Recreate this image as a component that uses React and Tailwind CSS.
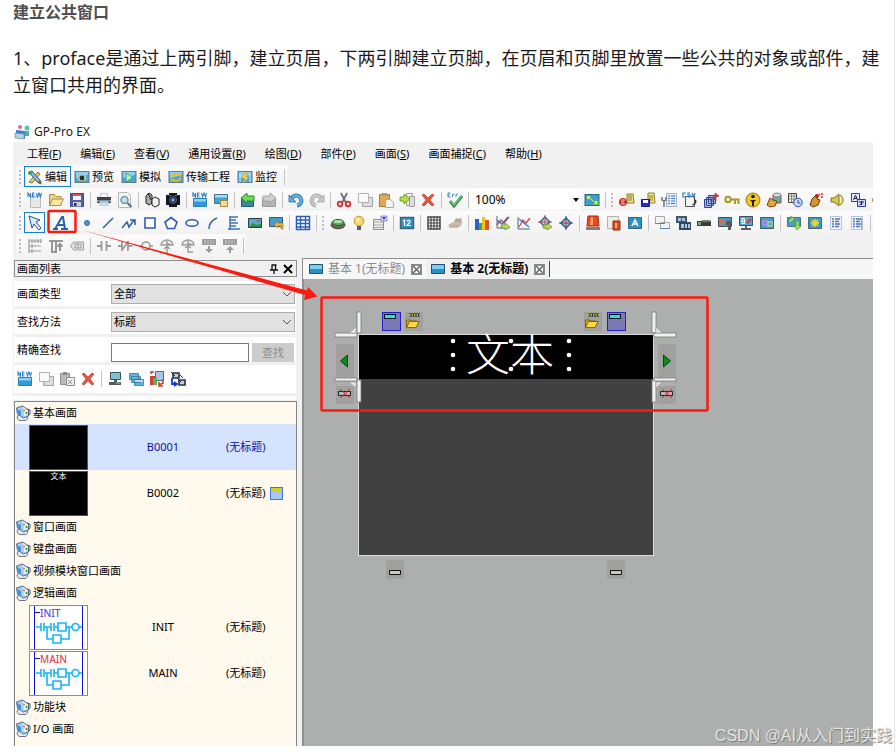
import { useState } from 'react';

const screenGlyph = (
  <>
    <rect x="1" y="2.5" width="14" height="11" fill="#4aa6dc" stroke="#5f7d8c" />
    <path d="M2 3h12v3L2 9z" fill="#8fd0f2" />
  </>
);

const newGlyph = (
  <path d="M1 5V1l2.500 4V1M7.500 1h-2v4h2M5.500 3h2M9.500 1l1 4 1.500-4 1.500 4 1-4" fill="none" stroke="#2f7fc4" strokeWidth="1.100" />
);

const pageLines = (
  <>
    <rect x="2.5" y="1.5" width="11" height="13" fill="#f1f5fb" stroke="#b9c4d6" />
    <path d="M4 4h2M7 4h5M4 6.500h2M7 6.500h4M4 9h2M7 9h5M4 11.500h2M7 11.500h4" stroke="#4d74b8" strokeWidth="1.300" />
  </>
);

const ICONS = {
  edit: (
    <>
      <path d="M2 13 11 3l2 2L5 14z" fill="#f0d34c" stroke="#6b7b4a" />
      <path d="m2 3 3-1 8 9 1 4-4-2z" fill="#8fb4d6" stroke="#4c5b6e" />
      <circle cx="3" cy="4" r="2" fill="#3fa24b" />
      <circle cx="13" cy="13" r="1.500" fill="#7a6020" />
    </>
  ),
  preview: (
    <>
      {screenGlyph}
      <ellipse cx="8" cy="9" rx="4.500" ry="3" fill="#c9c58a" />
      <circle cx="8" cy="9" r="2.400" fill="#1c3440" />
    </>
  ),
  simulate: (
    <>
      {screenGlyph}
      <path d="m5 4 7 4.500L5 13z" fill="#b7eec0" stroke="#4aa36a" />
    </>
  ),
  transfer: (
    <>
      {screenGlyph}
      <path d="M3.500 8a4.500 3.500 0 0 1 8-1.500M12.500 9a4.500 3.500 0 0 1-8 1.500" fill="none" stroke="#e5bd2e" strokeWidth="2" />
      <path d="m13.500 4-1 4-3.500-2zM2.500 13l1-4L7 11z" fill="#e5bd2e" />
    </>
  ),
  monitor: (
    <>
      {screenGlyph}
      <path d="M10 3 4 9h4l-2 5 6-6H9z" fill="#ffe04a" stroke="#c59b15" strokeWidth=".7" />
      <path d="M3 5v8M13 5v8" stroke="#dff3fb" />
    </>
  ),
  newFile: (
    <>
      <path d="M3.500 4.500h10v11h-10z" fill="#e6e8ea" stroke="#b8bcc0" />
      {newGlyph}
    </>
  ),
  open: (
    <>
      <path d="M1.500 13.500v-11h5l1.500 2h5v9z" fill="#ead489" stroke="#b0904a" />
      <path d="m1.500 13.500 3-6.500h11l-3 6.500z" fill="#f9e7a3" stroke="#b0904a" />
    </>
  ),
  save: (
    <>
      <path d="M1.500 1.500h13v13h-13z" fill="#5160a8" stroke="#3e4a86" />
      <path d="M4 2h8v6H4z" fill="#f7f7fb" />
      <path d="M4 2h8v2H4z" fill="#e0555a" />
      <path d="M4 10h8v4.500H4z" fill="#c5cde2" />
      <path d="M5 11h2.500v3H5z" fill="#2c3565" />
    </>
  ),
  print: (
    <>
      <path d="M4.500 1.500h7V6h-7z" fill="#f5f5f5" stroke="#c4c4c4" />
      <path d="M1 5h14v6H1z" fill="#3d4247" />
      <path d="M1 8h14v2H1z" fill="#8b9298" />
      <path d="M4 9.500h8l1 4.500H3z" fill="#b9daf0" />
    </>
  ),
  printPreview: (
    <>
      <path d="M1.500.5h9l3 3v12h-12z" fill="#f6f6f6" stroke="#b7b7b7" />
      <circle cx="7.500" cy="8" r="3.500" fill="#bfe3f2" stroke="#7b98a8" strokeWidth="1.500" />
      <path d="m10.500 11 4 4" stroke="#5a6f7c" strokeWidth="2" />
    </>
  ),
  copyBlocks: (
    <>
      <path d="m2 4 3-3 3 2v8l-3 2-3-2z" fill="#a9a9a9" stroke="#222" />
      <path d="m8 7 3-2 4 2v6l-4 2-3-2z" fill="#f2f2f2" stroke="#222" />
      <path d="m4 1 3 7" stroke="#222" />
    </>
  ),
  camera: (
    <>
      <path d="M4 1h8v2h3v10h-3v2H4v-2H1V3h3z" fill="#15181c" />
      <path d="M4 3h2v1H4zM10 3h2v1h-2z" fill="#6c7682" />
      <circle cx="8" cy="8" r="3.500" fill="#24354c" stroke="#4d5865" />
      <circle cx="8" cy="8" r="1.800" fill="#6c9ae0" />
    </>
  ),
  newScreen: (
    <>
      <path d="M1.500 6.500h13v8h-13z" fill="#2f9bdc" stroke="#2a7fb4" />
      <path d="M2 7h12v2.500H2z" fill="#8fd2f4" />
      {newGlyph}
    </>
  ),
  openScreen: (
    <>
      <path d="M1.500 2.500h13v9h-13z" fill="#3fa4dc" stroke="#44738c" />
      <path d="M2 3h12v2.500H2z" fill="#a6daf5" />
      <path d="M7.500 8.500h7v6h-7z" fill="#f5df8e" stroke="#a48b42" />
    </>
  ),
  importGreen: (
    <>
      <path d="M1.500 6.500h12v8h-12z" fill="#3a86a8" stroke="#245a70" />
      <path d="m1 6 6-5v3h7v5H7v2z" fill="#6edc52" stroke="#2d8a2a" />
    </>
  ),
  exportGray: (
    <>
      <path d="M1.500 6.500h13v8h-13z" fill="#b4b4b4" stroke="#9a9a9a" />
      <path d="m15 6-6-5v3H2v5h7v2z" fill="#cfcfcf" stroke="#a4a4a4" />
    </>
  ),
  undo: (
    <>
      <path d="M4 6a5 5 0 1 1 5 7.500" fill="none" stroke="#2f6f9f" strokeWidth="4" />
      <path d="M4 6a5 5 0 1 1 5 7.500" fill="none" stroke="#5cb2e4" strokeWidth="2.400" />
      <path d="M1 3v7h7z" fill="#5cb2e4" stroke="#2f6f9f" strokeWidth=".8" />
    </>
  ),
  redo: (
    <>
      <path d="M12 6a5 5 0 1 0-5 7.500" fill="none" stroke="#a2a2a2" strokeWidth="4" />
      <path d="M12 6a5 5 0 1 0-5 7.500" fill="none" stroke="#c9c9c9" strokeWidth="2.400" />
      <path d="M15 3v7H8z" fill="#c9c9c9" stroke="#a2a2a2" strokeWidth=".8" />
    </>
  ),
  cut: (
    <>
      <path d="m5 1 5 10M11 1 6 11" stroke="#6c7078" strokeWidth="1.800" />
      <circle cx="4" cy="12" r="2.300" fill="none" stroke="#d42a2a" strokeWidth="1.800" />
      <circle cx="12" cy="12" r="2.300" fill="none" stroke="#d42a2a" strokeWidth="1.800" />
    </>
  ),
  copy: (
    <>
      <path d="M5.500 5.500h10v9h-10z" fill="#dedede" stroke="#a3a3a3" />
      <path d="M1.500 1.500h10v9h-10z" fill="#fafafa" stroke="#b3b3b3" />
    </>
  ),
  paste: (
    <>
      <path d="M1.500 2.500h10v12h-10z" fill="#e0aa52" stroke="#a97b31" />
      <path d="M4 1h5v3H4z" fill="#9c9c9c" />
      <path d="M7.500 7.500h5l3 3v5h-8z" fill="#f4f4f4" stroke="#a9a9a9" />
    </>
  ),
  duplicate: (
    <>
      <path d="M7.500 1.500h6v12h-6z" fill="#eee" stroke="#9e9e9e" />
      <path d="M10.500 4.500h5v10h-5z" fill="#ddd" stroke="#9e9e9e" />
      <path d="M1 5h4V2l6 5-6 5V9H1z" fill="#b8e04e" stroke="#5f8b1f" strokeWidth=".8" />
    </>
  ),
  remove: <path d="m2 3 2-1 4 4 4-4 2 1-4 5 4 5-2 1-4-4-4 4-2-1 4-5z" fill="#e2563d" stroke="#a7382a" strokeWidth=".6" />,
  errorCheck: (
    <>
      <path d="M3.500 1H1v4h2.500M1 3h2M5.500 5V2.500l2-.5M9 5V2.500l2-.5" fill="none" stroke="#3c87d0" />
      <path d="m3 9 4 5 8-10" fill="none" stroke="#34954e" strokeWidth="3" />
      <path d="m3.500 9 3.500 4 7.500-9" fill="none" stroke="#8ee09c" />
    </>
  ),
  screenProp: (
    <>
      <rect x="1" y="2.500" width="14" height="11" fill="#3e9ec9" stroke="#2b6882" />
      <path d="M8 13h6.500V8z" fill="#7cc24b" />
      <path d="m4 5 8 6" stroke="#e2ec58" />
      <path d="M3 4h3v3H3zM11 9h2v3h-2z" fill="#e2ec58" />
    </>
  ),
  alarmDb: (
    <>
      <path d="M8 2h6l1 9H8z" fill="#f2e58a" stroke="#8a7d2a" />
      <path d="M9 4h4M9 6h4M9 8h4" stroke="#8a7d2a" />
      <circle cx="4" cy="10" r="4" fill="#c92d26" />
      <path d="M2 8h4M2 10h3M2 12h4" stroke="#fff" strokeWidth=".8" />
    </>
  ),
  saveDb: (
    <>
      <path d="M8 1h6l1 10H8z" fill="#f2e58a" stroke="#8a7d2a" />
      <path d="M9 4h4M9 6h4M9 8h4" stroke="#8a7d2a" />
      <path d="M1.500 7.500h8v7h-8z" fill="#2c2cc4" stroke="#1b1b7d" />
      <path d="M3 8h5v3H3z" fill="#fff" />
    </>
  ),
  toolList: (
    <>
      <path d="M5.500 1.500h10v13h-10z" fill="#e3edf8" stroke="#9fb3cc" />
      <path d="M7 4h2M10 4h4M7 6.500h2M10 6.500h4M7 9h2M10 9h4M7 11.500h2M10 11.500h4" stroke="#3f7dc0" strokeWidth="1.200" />
      <path d="M1 5v3l2 1 2-1V5M3 8v7" fill="none" stroke="#707478" strokeWidth="1.500" />
    </>
  ),
  csv: (
    <>
      <path d="M3.500 4.500h9v10h-9z" fill="#f4f4f4" stroke="#565656" />
      <path d="M4 1H1v4h3M8 1H6v2h2v2H6M10 1l1.500 4L13 1" fill="none" stroke="#2382cf" strokeWidth="1.200" />
      <path d="M12.500 8c2.500 1 1 4-2 5" fill="none" stroke="#333" strokeWidth="1.500" />
    </>
  ),
  stackRed: (
    <>
      <path d="M1.500 7.500h7v8h-7zM3.500 5.500h7v8h-7zM5.500 3.500h7v8h-7z" fill="#a9bbea" stroke="#34458f" />
      <path d="M7 7h4M7 9h4" stroke="#34458f" />
      <path d="M9 5h3V1l4 3-3 1v4z" fill="#e2403a" stroke="#8d1f1a" strokeWidth=".6" />
    </>
  ),
  key: (
    <>
      <circle cx="4" cy="7.500" r="2.700" fill="none" stroke="#a99a22" strokeWidth="2" />
      <path d="M7 7.500h8.500M11 8v4M14.500 8v4" stroke="#a99a22" strokeWidth="2" />
    </>
  ),
  info: (
    <>
      <circle cx="8" cy="8" r="7" fill="#f6c81f" stroke="#8d6f10" />
      <circle cx="8" cy="4.500" r="1.800" fill="#222" />
      <path d="M5 8h6l-2 2v4H7v-4z" fill="#222" />
    </>
  ),
  handData: (
    <>
      <path d="M7 3h8v8H7z" fill="#58b4a4" stroke="#a8464a" />
      <ellipse cx="11" cy="3" rx="4" ry="2" fill="#d6dedc" stroke="#7b8583" />
      <path d="m1 13 3-7 3 2 4 1-2 5-5 1z" fill="#e3a43e" stroke="#6f4513" />
    </>
  ),
  clockTable: (
    <>
      <path d="M1.500 1.500h8v9h-8z" fill="#f5f5d5" stroke="#444" />
      <path d="M2 4h7M2 7h7M4.500 2v8M7 2v8" stroke="#888" />
      <circle cx="11" cy="10.500" r="4.300" fill="#c8d9f5" stroke="#2d4fa6" />
      <path d="M11 8v3h2.500" fill="none" stroke="#2d4fa6" />
    </>
  ),
  handSpark: (
    <>
      <path d="m2 13 2-6 4-4 2 1-1 3 3 1-2 5-5 2z" fill="#d79333" stroke="#69380f" />
      <path d="m11 2 1 1M14 1v2M13 5h2" stroke="#e02a22" strokeWidth="1.500" />
      <circle cx="9" cy="4" r="2" fill="#b42a1c" />
    </>
  ),
  speaker: (
    <>
      <path d="M2 6h3l5-4v12l-5-4H2z" fill="#d5cb52" stroke="#77701a" />
      <path d="M11 3c4 2 4 8 0 10" fill="#efe9a6" stroke="#77701a" />
    </>
  ),
  language: (
    <>
      <path d="M1.500 1.500h8v8h-8z" fill="#e9eefc" stroke="#2a3f9e" />
      <path d="M7.500 7.500h8v7h-8z" fill="#cfd9f7" stroke="#2a3f9e" />
      <path d="M3.500 8 5.500 3l2 5M4 6.500h3M9 10h5M11.500 9v4M9.500 13l3-2" fill="none" stroke="#14205e" />
    </>
  ),
  dash: <path d="M1 8h10" stroke="#9b8a3f" strokeWidth="3" />,
  pointer: <path d="m2 1 11 4-4 2 5 6-2 2-5-6-2 4z" fill="#dcecfb" stroke="#24548f" />,
  letterA: <path d="M0 14h5M8 14h7M2 14 9 2h1l2 12M5 10h6" fill="none" stroke="#2b62a8" strokeWidth="2" />,
  dot: <circle cx="8" cy="8" r="2.500" fill="#5691d8" stroke="#2c66ad" />,
  line: <path d="M3 13 13 3" stroke="#3265ad" strokeWidth="1.600" />,
  polyline: <path d="m1 13 5-6 2 5 5-7M9 5h5v5" fill="none" stroke="#3265ad" strokeWidth="1.600" />,
  rect: <path d="M3 3h10v10H3z" fill="#fff" stroke="#2c5dad" strokeWidth="1.600" />,
  polygon: <path d="m8 2.500 6 4.500-2.500 6.500h-7L2 7z" fill="#fff" stroke="#2c5dad" strokeWidth="1.600" />,
  ellipse: <ellipse cx="8" cy="8" rx="6" ry="3.300" fill="#fff" stroke="#2c5dad" strokeWidth="1.600" />,
  arc: <path d="M4 14c0-6 3-9 8-11" fill="none" stroke="#3265ad" strokeWidth="1.600" />,
  scale: <path d="M4 1v14M4 2h8M4 5h6M4 8h8M4 11h6M2 14h12" stroke="#3f74bc" strokeWidth="1.500" fill="none" />,
  image: (
    <>
      <path d="M1.500 3.500h13v9h-13z" fill="#58a7d4" stroke="#293d47" />
      <path d="m2 12 4-4 3 2 5-1v3z" fill="#3a8a3d" />
      <circle cx="11" cy="6" r="1.300" fill="#e34a3c" />
    </>
  ),
  imageCall: (
    <>
      <path d="M1.500 2.500h13v9h-13z" fill="#4a9cc8" stroke="#2f5c73" />
      <path d="m6 10 4-4v2h5v6h-2v-3h-3v2z" fill="#f0b33a" stroke="#99661a" strokeWidth=".6" />
    </>
  ),
  table: (
    <>
      <path d="M1.500 1.500h13v13h-13z" fill="#fff" stroke="#2d5eb0" strokeWidth="1.500" />
      <path d="M1 5h14M1 8.500h14M1 12h14M5.500 1v14M10.500 1v14" stroke="#2d5eb0" strokeWidth="1.300" />
    </>
  ),
  lampSwitch: (
    <>
      <ellipse cx="8" cy="10" rx="7" ry="3.800" fill="#6d6a52" stroke="#4a4838" />
      <ellipse cx="8" cy="7.500" rx="6" ry="3" fill="#59ac5e" stroke="#2d5e32" />
      <ellipse cx="8" cy="6.500" rx="4" ry="1.300" fill="#b9ecb5" />
    </>
  ),
  bulb: (
    <>
      <circle cx="8" cy="6" r="4.800" fill="#fbd968" stroke="#c8962a" />
      <circle cx="7" cy="5" r="1.800" fill="#fff5c9" />
      <path d="M6 11h4v4H6z" fill="#5d6066" />
    </>
  ),
  listDrop: (
    <>
      <path d="M1.500 4.500h10v10h-10z" fill="#eee" stroke="#8d8d8d" />
      <path d="M2 7h9M2 10h9M2 12.500h9" stroke="#a5a5a5" />
      <path d="M9 1h6v5H9z" fill="#d9d9fb" stroke="#6a6ad0" strokeWidth=".7" />
      <path d="M10 2h4l-2 3z" fill="#3a3ad0" />
    </>
  ),
  numeric: (
    <>
      <path d="M1.500 2.500h13v11h-13z" fill="#2f92c6" stroke="#4a5f6c" strokeWidth="1.500" />
      <path d="m4 6 1.500-1v6M8 6.500C8.500 4.500 11.500 5 11 7l-3 3.500h4" fill="none" stroke="#fff" strokeWidth="1.200" />
    </>
  ),
  keypad: (
    <>
      <path d="M2 2h12v12H2z" fill="#fff" stroke="#444" strokeWidth="1.500" />
      <path d="M2 5h12M2 8h12M2 11h12M5 2v12M8 2v12M11 2v12" stroke="#444" strokeWidth="1.200" />
    </>
  ),
  recipe: (
    <>
      <path d="m1 10 5-3 9 1-2 4H3z" fill="#c7bba5" />
      <path d="m7 7 2-4 2 1 3-1 1 5z" fill="#b5a88f" />
      <path d="M2 12h9" stroke="#a39987" />
    </>
  ),
  bars: (
    <>
      <path d="M1 4h4v11H1z" fill="#2b62c6" />
      <path d="M5 8h3v7H5z" fill="#35a84c" />
      <path d="M8 2h3v13H8z" fill="#f2c31d" />
      <path d="M11 5h4v10h-4z" fill="#e2502a" />
    </>
  ),
  trendGreen: (
    <>
      <path d="M2 1v12h12" fill="none" stroke="#44658f" />
      <path d="m2 10 4-5 3 3 5-6" fill="none" stroke="#d04646" strokeWidth="1.300" />
      <path d="m2 5 5 4 6-7" fill="none" stroke="#3270c0" strokeWidth="1.300" />
      <path d="M6 10h4V8l5 4-5 3v-2H6z" fill="#b4e045" stroke="#5c8a1e" strokeWidth=".7" />
    </>
  ),
  trend: (
    <>
      <path d="M2 2v12h12" fill="none" stroke="#44658f" />
      <path d="m3 12 4-7 3 3 4-5" fill="none" stroke="#d04646" strokeWidth="1.300" />
      <path d="m3 4 10 8" stroke="#3270c0" strokeWidth="1.300" />
    </>
  ),
  targetGreen: (
    <>
      <path d="m8 2 5 5-5 5-5-5z" fill="#c6d3ea" stroke="#38557f" strokeWidth="1.300" />
      <path d="M8 0v14M1 7h14" stroke="#b54a4a" />
      <path d="M6 10h4V8l5 4-5 3v-2H6z" fill="#b4e045" stroke="#5c8a1e" strokeWidth=".7" />
    </>
  ),
  target: (
    <>
      <path d="m8 3 5 5-5 5-5-5z" fill="#c6d3ea" stroke="#32598f" strokeWidth="1.500" />
      <path d="M8 1v14M1 8h14" stroke="#364c70" />
      <circle cx="8" cy="8" r="1.500" fill="#d04646" />
    </>
  ),
  alarm: (
    <>
      <path d="M3 1h10l1 10H2z" fill="#ec4a22" stroke="#9c2d12" />
      <path d="M6 2h2v8H5z" fill="#ffa05e" />
      <path d="M1 12h14v3H1z" fill="#8a7a74" />
    </>
  ),
  alarmPage: (
    <>
      <path d="M1.500 1.500h11v12h-11z" fill="#eeece9" stroke="#b6b2ad" />
      <path d="M7 6h7v9H7z" fill="#e04c22" stroke="#8e2a10" />
      <path d="M9 8h2v5H9z" fill="#ffb27a" />
    </>
  ),
  textA: (
    <>
      <path d="M1.500 2.500h13v11h-13z" fill="#2d93c4" stroke="#3d6478" />
      <path d="m5 11 3-6 3 6M6 9h4" fill="none" stroke="#fff" strokeWidth="1.500" />
    </>
  ),
  windows: (
    <>
      <path d="M1.500 1.500h9v7h-9zM6.500 7.500h9v6h-9z" fill="#f3f3f3" stroke="#a6a9ad" />
      <path d="M1 8.500h10M6 13.500h10" stroke="#5b83b5" />
    </>
  ),
  film: (
    <>
      <path d="M1 1h11v7H1z" fill="#4b5664" />
      <path d="M4 7h12v8H4z" fill="#35475c" />
      <path d="M3 3h3v3H3zM7 3h3v3H7zM6 9h3v4H6zM10 9h2v4h-2zM13 9h2v4h-2z" fill="#a9c7e2" />
    </>
  ),
  movie: (
    <>
      <path d="M1 6h14v5H1z" fill="#3b3e36" />
      <path d="M2 7h3v3H2z" fill="#8b9c7b" />
      <path d="M6 5h8v2H6z" fill="#777b70" />
    </>
  ),
  videoTools: (
    <>
      <path d="M1.500 2.500h13v9h-13z" fill="#4d97bf" stroke="#41515c" />
      <path d="m3 4 6 2v2l-6 2z" fill="#c97460" />
      <path d="M9 6h6v3l-1 1v5h-3v-5H9z" fill="#585b5e" />
    </>
  ),
  pcMonitor: (
    <>
      <path d="M1.500 1.500h13v9h-13z" fill="#4fa6d8" stroke="#42515c" />
      <path d="M4 3.500h2.500v5H4zM4 6h3" fill="none" stroke="#fff" />
      <path d="m9 8 4-4" stroke="#d03a3a" strokeWidth="2" />
      <path d="M7 11h2v2h4v2H3v-2h4z" fill="#5c6064" />
    </>
  ),
  videoWindow: (
    <>
      <path d="M1.500 2.500h13v11h-13z" fill="#4b9bd2" stroke="#3f5c70" />
      <path d="M4 6h4v4H4z" fill="none" stroke="#c58ade" strokeWidth="1.300" />
      <path d="M9 7h4v4H9z" fill="none" stroke="#9fdc8a" strokeWidth="1.300" />
    </>
  ),
  screenDown: (
    <>
      <path d="M1.500 2.500h13v9h-13z" fill="#4aa0c2" stroke="#4a7280" />
      <path d="M3 7V4h2V1l4 3-4 3M10 6h3v5h2l-4 4-3-4h2z" fill="#9ee05a" stroke="#4b8a28" strokeWidth=".6" />
    </>
  ),
  screenStar: (
    <>
      <path d="M1.500 2.500h13v11h-13z" fill="#3f9ac8" stroke="#4a6674" />
      <path d="M8 4v8M4 8h8M5 5l6 6M11 5l-6 6" stroke="#f8d52e" strokeWidth="1.500" />
    </>
  ),
  textList: pageLines,
  textList2: (
    <>
      {pageLines}
      <path d="M12 3h1v11h-1z" fill="#8ea3c4" />
    </>
  ),
  rung: <path d="M2 1v14M1 3h13M5 1v4M8 1v4M11 1v4M14 1v4M2 8h12M2 13h12M5 11v4M5 6v4" fill="none" stroke="#9d9d9d" strokeWidth="1.200" />,
  branch: <path d="M1 3h14M4 3v11h4V3M12 13V6M9.500 8.500 12 6l2.500 2.500" fill="none" stroke="#969696" strokeWidth="2" />,
  label: (
    <>
      <path d="m1.500 8 3-4h10v8h-10z" fill="#e4e4e4" stroke="#9e9e9e" />
      <path d="M6 6h6v4H6zM9 6v4" fill="none" stroke="#9e9e9e" />
    </>
  ),
  contact: <path d="M1 8h4M11 8h4M5.500 3v10M10.500 3v10" stroke="#9b9b9b" strokeWidth="1.800" />,
  contactNot: <path d="M1 8h4M11 8h4M5 3v10M11 3v10M5 12l6-8" stroke="#9b9b9b" strokeWidth="1.800" />,
  coil: <path d="M1 8h3M12 8h3M4 8a4 4 0 0 1 8 0 4 4 0 0 1-8 0" fill="none" stroke="#9b9b9b" strokeWidth="1.600" />,
  timerUp: (
    <>
      <path d="M2 7a6 5 0 0 1 12 0z" fill="#eee" stroke="#999" strokeWidth="1.300" />
      <path d="M8 3v3h3M8 15V9M5 11l3-2.500 3 2.500" fill="none" stroke="#999" strokeWidth="1.400" />
    </>
  ),
  timerDown: (
    <>
      <path d="M2 7a6 5 0 0 1 12 0z" fill="#eee" stroke="#999" strokeWidth="1.300" />
      <path d="M8 3v3h3M5 10l3-2 3 2M8 9v5h5" fill="none" stroke="#999" strokeWidth="1.400" />
    </>
  ),
  counterDown: (
    <>
      <path d="M1 1h14v6H1z" fill="#9c9c9c" />
      <path d="M3 3h10M3 5h10" stroke="#c9c9c9" strokeDasharray="2 1" />
      <path d="M7 8h2v3h3l-4 4-4-4h3z" fill="#9c9c9c" />
    </>
  ),
  counterUp: (
    <>
      <path d="M1 1h14v6H1z" fill="#9c9c9c" />
      <path d="M3 3h10M3 5h10" stroke="#c9c9c9" strokeDasharray="2 1" />
      <path d="M7 15h2v-3h3L8 8l-4 4h3z" fill="#9c9c9c" />
    </>
  ),
  pasteGray: (
    <>
      <path d="M1.500 2.500h9v11h-9z" fill="#b9b9b9" stroke="#8e8e8e" />
      <path d="M4 1h4v3H4z" fill="#8a8a8a" />
      <path d="M7.500 6.500h8v8h-8z" fill="#ededed" stroke="#8e8e8e" />
      <path d="m9 13 4-4M9 9l4 4" stroke="#9b9b9b" />
    </>
  ),
  computer: (
    <>
      <path d="M3.500 1.500h10v7h-10z" fill="#7cc3d8" stroke="#3f4f57" />
      <path d="M7 9h3v2H7zM2 11h12v3H2z" fill="#555d62" />
      <path d="M9 12h4" stroke="#7ee06a" />
    </>
  ),
  layers: (
    <>
      <path d="M1.500 2.500h9v6h-9zM3.500 5.500h9v6h-9zM6.500 8.500h9v6h-9z" fill="#61b4de" stroke="#39799c" strokeWidth=".8" />
      <path d="M7 9h8v2H7z" fill="#b7e0f4" />
    </>
  ),
  convert: (
    <>
      <path d="M6.500.5h8v9h-8z" fill="#a7c6ec" stroke="#49669c" />
      <path d="M1 5h6v9H1z" fill="#d53d34" />
      <path d="M4 7h4v7H4z" fill="#57b54b" />
      <path d="M2 3v-2h3M10 14l4-2V8M10 11v4h4" fill="none" stroke="#d53d34" strokeWidth="1.600" />
    </>
  ),
  network: (
    <>
      <path d="M3 2h6v5H3zM9 9h6v5H9z" fill="#bcd0dd" stroke="#27323a" strokeWidth="1.600" />
      <path d="M2 7v6h4M4 11l3 2-3 2" fill="none" stroke="#1b39d8" strokeWidth="1.800" />
      <path d="m1 1 4 4M8 8l3 3M10 4l3 3" stroke="#27323a" />
    </>
  ),
  disk: (
    <>
      <path d="M3 10h8l2 3-2 2.500H4L2 13z" fill="#e3e8ef" stroke="#6e7b8c" />
      <path d="m1.500 3 6-2 6 4v6l-5 2-6-4z" fill="#a7cdf0" stroke="#4d6a8d" />
      <path d="m8 2 5 3.500V10l-4 1z" fill="#f3f3ee" />
      <path d="m2 4 4 2v5L3 9z" fill="#3f95dd" />
      <circle cx="9" cy="5.500" r="1.100" fill="#e87d27" />
      <circle cx="11.500" cy="8" r="1.200" fill="#3fae46" />
      <path d="m12 4 3 1v4l-2 2" fill="none" stroke="#555" />
    </>
  ),
  tabScreen: (
    <>
      <path d="M1.500 3.500h13v9h-13z" fill="#2d8fc8" stroke="#22506d" />
      <path d="M2 4h12v4H2z" fill="#7ecdf2" />
    </>
  ),
};

// '|' is a separator, ':' a grip that starts the next group
const ROW_FILE = ['newFile', 'open', 'save', '|', 'print', 'printPreview', '|', 'copyBlocks', 'camera', '|', 'newScreen', 'openScreen', '|', 'importGreen', 'exportGray', '|', 'undo', 'redo', '|', 'cut', 'copy', 'paste', 'duplicate', 'remove', '|', 'errorCheck', '|'];
const ROW_SYSTEM = ['screenProp', '|', ':', 'alarmDb', 'saveDb', 'toolList', 'csv', 'stackRed', 'key', 'info', 'handData', 'clockTable', 'handSpark', 'speaker', 'language', 'dash'];
const ROW_DRAW = ['dot', 'line', 'polyline', 'rect', 'polygon', 'ellipse', 'arc', 'scale', 'image', 'imageCall', '|', 'table', '|', ':', 'lampSwitch', 'bulb', 'listDrop', '|', 'numeric', '|', 'keypad', 'recipe', '|', 'bars', 'trendGreen', 'trend', 'targetGreen', 'target', '|', 'alarm', 'alarmPage', 'textA', '|', 'windows', 'film', 'movie', 'videoTools', 'pcMonitor', 'videoWindow', '|', 'screenDown', 'screenStar', 'textList', 'textList2', '|'];
const ROW_LOGIC = ['rung', 'branch', 'label', '|', 'contact', 'contactNot', 'coil', 'timerUp', 'timerDown', 'counterDown', 'counterUp', '|'];

const MENUS = [
  ['工程', 'F'],
  ['编辑', 'E'],
  ['查看', 'V'],
  ['通用设置', 'R'],
  ['绘图', 'D'],
  ['部件', 'P'],
  ['画面', 'S'],
  ['画面捕捉', 'C'],
  ['帮助', 'H'],
];

const MODES = [
  ['edit', '编辑'],
  ['preview', '预览'],
  ['simulate', '模拟'],
  ['transfer', '传输工程'],
  ['monitor', '监控'],
];

function Icon({ name, className = 'size-4' }) {
  return (
    <svg viewBox="0 0 16 16" className={`shrink-0 ${className}`} aria-hidden="true">
      {ICONS[name]}
    </svg>
  );
}

function Grip() {
  return (
    <span className="flex w-2 shrink-0 flex-col items-center gap-[2px]">
      {[0, 1, 2, 3].map((i) => (
        <i key={i} className="size-[2px] bg-[#bdbdbd]" />
      ))}
    </span>
  );
}

function Separator() {
  return (
    <span className="flex w-[6px] shrink-0 justify-center">
      <i className="h-4 w-px bg-[#c3c3c3]" />
    </span>
  );
}

function Tools({ items }) {
  return items.map((name, i) => {
    if (name === '|') return <Separator key={i} />;
    if (name === ':') return <Grip key={i} />;
    return (
      <button key={i} type="button" aria-label={name} className="flex h-5 w-[21px] shrink-0 items-center justify-center">
        <Icon name={name} />
      </button>
    );
  });
}

function ToolRow({ children, fit = false }) {
  return (
    <div
      className={`ml-[3px] flex h-[23px] items-center overflow-hidden rounded-l bg-gradient-to-b from-[#fcfcfc] to-[#f2f2f2] ${
        fit ? 'w-fit' : ''
      }`}
    >
      {children}
    </div>
  );
}

function Field({ id, label, children }) {
  return (
    <div className="flex h-[28px] items-center border-b-[3px] border-[#f0f0f0] bg-white pl-[3px]">
      <label htmlFor={id} className="w-[94px] shrink-0">
        {label}
      </label>
      {children}
    </div>
  );
}

function Dropdown({ id, options }) {
  return (
    <div className="relative mr-px flex-1">
      <select id={id} className="block h-5 w-full appearance-none border border-[#adadad] bg-[#e1e1e1] px-[2px] leading-none">
        {options.map((o) => (
          <option key={o}>{o}</option>
        ))}
      </select>
      <svg viewBox="0 0 10 10" className="pointer-events-none absolute top-[5px] right-[3px] size-[10px]">
        <path d="m1 3 4 4 4-4" fill="none" stroke="#555" />
      </svg>
    </div>
  );
}

function Group({ title }) {
  return (
    <div className="flex h-[22px] items-center gap-[2px]">
      <Icon name="disk" />
      {title}
    </div>
  );
}

function LadderThumb({ title, className }) {
  return (
    <div className="relative h-[45px] w-[59px] border border-[#8c8c8c] bg-white">
      <svg viewBox="0 0 57 43" className="absolute inset-0 size-full">
        <path d="M4.500 0v43M52.500 0v43M5 6.500h5" stroke="#1010d0" fill="none" />
        <path
          d="M6 21h5M14 21h2M19 21h2M24 21h4M36 21h6M49 21h3M11 17v8M14 17v8M21 17v8M24 17v8M28 17h8v8h-8zM17 21v12h6M23 29h8v8h-8zM31 33h8V21M16 21h5"
          fill="none"
          stroke="#18b5f0"
          strokeWidth="1.600"
        />
        <circle cx="45.500" cy="21" r="3.500" fill="none" stroke="#18b5f0" strokeWidth="1.600" />
      </svg>
      <span className={`absolute top-[2px] left-[10px] text-[10px] leading-[11px] font-medium ${className}`}>{title}</span>
    </div>
  );
}

function ScreenRow({ thumb, code, selected, badge, onClick }) {
  return (
    <button
      type="button"
      onClick={onClick}
      className={`flex h-[46px] w-full items-center pl-[14px] ${selected ? 'bg-[#d4e3ff] text-[#12129a]' : ''}`}
    >
      {thumb}
      <span className="ml-3 w-[126px] text-center">{code}</span>
      <span>(无标题)</span>
      {badge && <i className="ml-1 size-[13px] border border-[#3a78e0] bg-gradient-to-b from-[#d8d020] from-40% to-[#a9c8f0] to-40%" />}
    </button>
  );
}

function SidePanel() {
  const [current, setCurrent] = useState('B0001');

  return (
    <aside className="flex w-[284px] shrink-0 flex-col pl-px">
      <header className="mt-[3px] flex h-[17px] items-center border border-[#8f8f8f] bg-[#f0f0f0] pr-[3px] pl-[2px]">
        <h2 className="flex-1">画面列表</h2>
        <svg viewBox="0 0 10 10" className="mr-1 size-[10px]">
          <path d="M2.500 1h5M3 1v5M6.500 1v5M1 6h8M5 6v4" fill="none" stroke="#111" strokeWidth="1.300" />
        </svg>
        <svg viewBox="0 0 10 10" className="size-[10px]">
          <path d="m1 1 8 8M9 1 1 9" stroke="#000" strokeWidth="2" />
        </svg>
      </header>

      <div className="mt-1 mr-px">
        <Field id="kind" label="画面类型">
          <Dropdown id="kind" options={['全部', '基本画面', '窗口画面']} />
        </Field>
        <Field id="method" label="查找方法">
          <Dropdown id="method" options={['标题', '编号']} />
        </Field>
        <Field id="query" label="精确查找">
          <input id="query" className="mr-[3px] h-[19px] min-w-0 flex-1 self-end border border-[#7a7a7a] bg-white px-1" />
          <button type="button" className="mr-[2px] h-[19px] w-[42px] self-end bg-[#cccccc] text-[#8d8d8d]" disabled>
            查找
          </button>
        </Field>
        <div className="flex h-[31px] items-center border-b-[3px] border-[#f0f0f0] bg-white">
          <Tools items={['newScreen', 'copy', 'pasteGray', 'remove', '|', 'computer', 'layers', 'convert', 'network']} />
        </div>
        <div className="h-1 bg-white" />
      </div>

      <div className="mt-px flex-1 border border-b-0 border-[#858585] bg-[#fff9ee]">
        <Group title="基本画面" />
        <ScreenRow
          code="B0001"
          selected={current === 'B0001'}
          onClick={() => setCurrent('B0001')}
          thumb={<div className="h-[45px] w-[59px] border border-[#555] bg-black" />}
        />
        <ScreenRow
          code="B0002"
          badge
          selected={current === 'B0002'}
          onClick={() => setCurrent('B0002')}
          thumb={<div className="h-[45px] w-[59px] border border-[#555] bg-black text-center text-[8px] leading-[8px] text-white">文本</div>}
        />
        <Group title="窗口画面" />
        <Group title="键盘画面" />
        <Group title="视频模块窗口画面" />
        <Group title="逻辑画面" />
        <ScreenRow
          code="INIT"
          selected={current === 'INIT'}
          onClick={() => setCurrent('INIT')}
          thumb={<LadderThumb title="INIT" className="text-[#5a4fd0]" />}
        />
        <ScreenRow
          code="MAIN"
          selected={current === 'MAIN'}
          onClick={() => setCurrent('MAIN')}
          thumb={<LadderThumb title="MAIN" className="text-[#e04848]" />}
        />
        <Group title="功能块" />
        <Group title="I/O 画面" />
      </div>
    </aside>
  );
}

function Tab({ title, active }) {
  return (
    <div className={`flex items-center self-stretch pl-1 ${active ? 'bg-[#f0f0f0] font-bold text-black' : 'text-[#8c8c8c]'}`}>
      <Icon name="tabScreen" />
      <span className="mr-[6px] ml-1 text-[12px] whitespace-nowrap">{title}</span>
      <button type="button" aria-label="close" className="mr-1 flex size-[11px] items-center justify-center border-2 border-[#8a8a8a] bg-white">
        <svg viewBox="0 0 6 6" className="size-[7px]">
          <path d="m0 0 6 6M6 0 0 6" stroke="#666" strokeWidth="1.300" />
        </svg>
      </button>
    </div>
  );
}

function FolderGlyph({ x }) {
  return (
    <g transform={`translate(${x} 312)`}>
      <rect width="18" height="19" fill="#a0a09e" />
      <path d="M4 3h11" stroke="#222" strokeWidth="3" />
      <path d="M4 3h11" stroke="#e8e23a" strokeWidth="1.500" strokeDasharray="1.500 1" />
      <path d="M1.500 15V8h4l1 1h5v2" fill="#d8a81c" stroke="#6b500c" strokeWidth=".8" />
      <path d="m1.500 15.500 3-6h9.500l-3 6z" fill="#ffd83c" stroke="#6b500c" strokeWidth=".8" />
    </g>
  );
}

// header / footer handles that surround the edited screen
function FrameHandles() {
  return (
    <svg viewBox="304 279 569 467" className="absolute top-0 left-0 h-[467px] w-[569px]" aria-hidden="true">
      {[382, 607].map((x) => (
        <g key={x}>
          <rect x={x + 0.5} y="312.500" width="18" height="18" fill="#7a79b4" stroke="#2320c8" />
          <rect x={x + 2.5} y="314.500" width="11" height="4" fill="#12e8f0" stroke="#111" />
        </g>
      ))}
      <FolderGlyph x={405} />
      <FolderGlyph x={584} />

      {[336, 658].map((x) => (
        <g key={x}>
          <rect x={x} y="344" width="18" height="33" fill="#a0a09e" />
          <rect x={x} y="386" width="18" height="18" fill="#a0a09e" />
          <path d={`M${x + 2.5} 391.500h12v4h-12z`} fill="#b7b9b7" stroke="#222" />
          <path d={`m${x + 4} 389 10 9m0-9-10 9`} stroke="#e02020" />
        </g>
      ))}
      <path d="M347.500 355v12l-7-6z" fill="#0a8a18" stroke="#064a0c" />
      <path d="M663.500 355v12l7-6z" fill="#0a8a18" stroke="#064a0c" />

      {[359, 654].map((x) => (
        <g key={x} fill="#f2f2f2" stroke="#777" strokeWidth=".8">
          <rect x={x - 2} y="312" width="4" height="21" />
          <rect x={x - 2} y="380" width="4" height="22" />
        </g>
      ))}
      {[335, 654].map((x) => (
        <g key={x} fill="#f2f2f2" stroke="#777" strokeWidth=".8">
          <rect x={x} y="333" width="22" height="4" />
          <rect x={x} y="378" width="22" height="3" />
        </g>
      ))}
      <path d="m349 333 7-6v6zM356 382v6l-7-6zM656 327l6 6h-6zM656 382h6l-6 6z" fill="#e6e6e6" stroke="#999" strokeWidth=".6" />

      {[386, 607].map((x) => (
        <g key={x}>
          <rect x={x} y="560" width="18" height="19" fill="#a0a09e" />
          <path d={`M${x + 3.5} 570.500h11v4h-11z`} fill="#c6c8c6" stroke="#111" />
        </g>
      ))}
    </svg>
  );
}

function Workspace() {
  return (
    <section className="mt-px ml-[5px] flex min-w-0 flex-1 flex-col border-t border-l border-[#8f8f8f]">
      <div className="flex h-5 items-center bg-[#f7f7f7] pl-[1px]">
        <Tab title="基本 1(无标题)" />
        <Tab title="基本 2(无标题)" active />
        <i className="h-4 w-px bg-[#444]" />
      </div>
      <div className="relative flex-1 overflow-hidden border-l border-[#8f8f8f] bg-[#adafae]">
        <div className="absolute top-[55px] left-[54px] h-[222px] w-[296px] border border-[#dcdcdc] bg-[#414141]">
          <div className="relative h-[44px] bg-black pl-2 text-center">
            <span className="text-[44px] leading-[38px] font-light text-white">文本</span>
            <svg viewBox="0 0 122 34" className="absolute top-[3px] left-[91px] h-[34px] w-[122px]">
              {[[3, 3], [61, 3], [119, 3], [3, 17], [119, 17], [3, 31], [61, 31], [119, 31]].map(([x, y]) => (
                <circle key={`${x}-${y}`} cx={x} cy={y} r="2.300" fill="#fff" />
              ))}
            </svg>
          </div>
        </div>
        <FrameHandles />
      </div>
    </section>
  );
}

// red call-outs drawn over the window
function Annotations() {
  return (
    <svg viewBox="13 121 860 625" className="pointer-events-none absolute top-0 left-0 h-[625px] w-[860px]" aria-hidden="true">
      <rect x="48.500" y="211" width="27" height="21" rx="1" fill="none" stroke="#fb1a0e" strokeWidth="2.500" />
      <rect x="321.500" y="297.500" width="386" height="113" rx="1" fill="none" stroke="#fb1a0e" strokeWidth="2.500" />
      <path d="m82 230 225 60.500 1-3.500 9.500 9.500-13.500 3.500 1-5z" fill="#fb1a0e" />
    </svg>
  );
}

function AppWindow() {
  return (
    <div className="relative flex min-h-[625px] flex-col text-[11px] leading-4 text-black">
      <div className="flex h-[21px] items-center gap-1 pl-px text-[12px] text-[#222]">
        <svg viewBox="0 0 16 16" className="size-4">
          <circle cx="6" cy="3" r="2" fill="#e8609a" />
          <circle cx="13" cy="4" r="2.500" fill="#58c8a4" />
          <path d="M10 7h5v5h-5z" fill="#46b890" />
          <path d="m2 6 9 1v8l-9-1z" fill="#3f80c0" />
          <path d="m1 9 9 1v5l-9-1z" fill="#b9cfe2" stroke="#6d8298" strokeWidth=".6" />
        </svg>
        GP-Pro EX
      </div>

      <div className="flex flex-1 flex-col bg-[#f1f1f1]">
        <nav className="flex h-[23px] items-center gap-[19px] pl-[14px]">
          {MENUS.map(([title, key]) => (
            <button key={title} type="button" className="whitespace-nowrap">
              {title}(<u>{key}</u>)
            </button>
          ))}
        </nav>

        <ToolRow fit>
          <Grip />
          {MODES.map(([icon, title], i) => (
            <button
              key={icon}
              type="button"
              className={`flex h-[21px] items-center gap-[2px] border pr-[3px] pl-[2px] whitespace-nowrap ${
                i === 0 ? 'border-[#1a7fd4]' : 'border-transparent'
              }`}
            >
              <Icon name={icon} />
              {title}
            </button>
          ))}
          <Separator />
        </ToolRow>

        <ToolRow>
          <Grip />
          <Tools items={ROW_FILE} />
          <select aria-label="zoom" className="h-[21px] w-[110px] shrink-0 appearance-none bg-white px-1 text-[12px] leading-none">
            <option>100%</option>
            <option>200%</option>
          </select>
          <svg viewBox="0 0 6 4" className="-ml-[10px] h-1 w-[10px] shrink-0">
            <path d="M0 0h6L3 4z" />
          </svg>
          <Tools items={ROW_SYSTEM} />
        </ToolRow>

        <ToolRow>
          <Grip />
          <button type="button" aria-label="select" className="flex size-[21px] shrink-0 items-center justify-center border border-[#1a7fd4]">
            <Icon name="pointer" />
          </button>
          <button type="button" aria-label="text" className="flex h-[21px] w-[31px] shrink-0 items-center justify-center">
            <Icon name="letterA" />
          </button>
          <Tools items={ROW_DRAW} />
        </ToolRow>

        <ToolRow fit>
          <Grip />
          <Tools items={ROW_LOGIC} />
        </ToolRow>

        <div className="flex flex-1">
          <SidePanel />
          <Workspace />
        </div>
      </div>

      <Annotations />
    </div>
  );
}

export default function App() {
  return (
    <main className="relative mr-px min-h-screen border-r border-[#e2e2e2] bg-white pr-[21px] pl-[13px] font-['Noto_Sans','Noto_Sans_CJK_SC',sans-serif]">
      <h1 className="text-[16px] leading-6 font-bold text-[#4f4f4f]">建立公共窗口</h1>
      <p className="-mr-3 mt-[21px] mb-[22px] text-[18px] leading-[27px] font-normal text-[#1a1a1a]">
        1、proface是通过上两引脚，建立页眉，下两引脚建立页脚，在页眉和页脚里放置一些公共的对象或部件，建立窗口共用的界面。
      </p>
      <AppWindow />
      <p className="absolute right-[2px] bottom-1 font-['Liberation_Sans','Noto_Sans_CJK_SC',sans-serif] text-[16px] leading-6 text-[#e4e4e4] [text-shadow:1px_1px_1px_#777]">
        CSDN @AI从入门到实践
      </p>
    </main>
  );
}
